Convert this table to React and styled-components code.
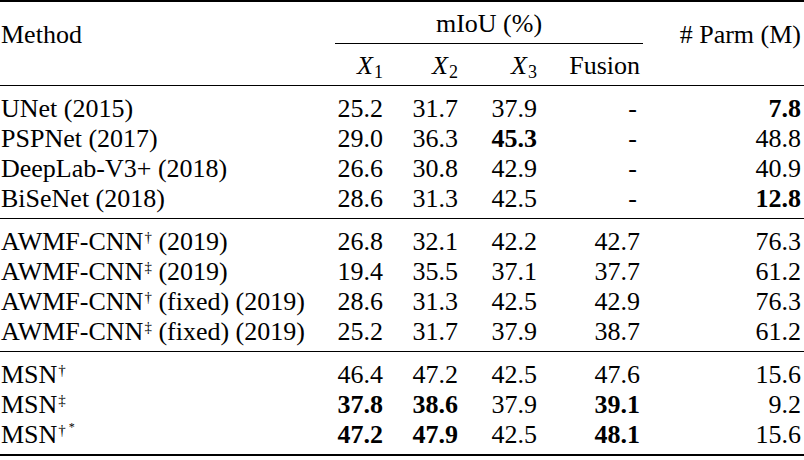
import React from "react";
import styled, { createGlobalStyle } from "styled-components";

const COLS = "335px 51px 75px 79px 103px 161px";

const GlobalStyle = createGlobalStyle`
  html, body { margin: 0; padding: 0; background: #fff; }
  body { width: 804px; height: 460px; overflow: hidden; }
`;

const Table = styled.div`
  width: 804px;
  font-family: "Liberation Serif", "Times New Roman", serif;
  font-size: 26px;
  color: #000;
`;

const Rule = styled.div`
  height: ${(p) => (p.$heavy ? "2px" : "1px")};
  background: #000;
`;

const Header = styled.div`
  display: grid;
  grid-template-columns: ${COLS};
  grid-template-rows: 30px 12px 30px;
  line-height: 30px;
  padding: 7px 0 4px;
`;

const SpanHead = styled.div`
  grid-row: 1 / 4;
  grid-column: ${(p) => p.$col};
  text-align: ${(p) => (p.$right ? "right" : "left")};
  padding: 11px ${(p) => (p.$right ? "3px" : "0")} 0 ${(p) => (p.$right ? "0" : "1px")};
  white-space: nowrap;
`;

const GroupHead = styled.div`
  grid-row: 1;
  grid-column: 2 / 6;
  text-align: center;
`;

const CmidRule = styled.div`
  grid-row: 2;
  grid-column: 2 / 6;
  align-self: start;
  margin-top: 4px;
  height: 1px;
  background: #000;
`;

const SubHead = styled.div`
  grid-row: 3;
  grid-column: ${(p) => p.$col};
  text-align: right;
  padding-right: 3px;
  white-space: nowrap;
`;

const Var = styled.span`
  font-style: italic;
`;

const Sub = styled.sub`
  font-style: normal;
  font-size: 18px;
  vertical-align: -4px;
  line-height: 0;
  margin-left: 1px;
`;

const Block = styled.div`
  padding: 8px 0 4px;
`;

const Row = styled.div`
  display: grid;
  grid-template-columns: ${COLS};
  height: 30px;
  line-height: 30px;
`;

const Cell = styled.div`
  text-align: ${(p) => (p.$left ? "left" : "right")};
  padding: 0 ${(p) => (p.$left ? "0" : p.$dash ? "6px" : "3px")} 0 ${(p) => (p.$left ? "1px" : "0")};
  font-weight: ${(p) => (p.$bold ? 700 : 400)};
  white-space: nowrap;
`;

const Sup = styled.sup`
  font-size: 15px;
  vertical-align: 8px;
  line-height: 0;
  margin-left: 1px;
`;

const Sup2 = styled.sup`
  font-size: 12px;
  vertical-align: 4px;
  line-height: 0;
  margin-left: 3px;
`;

const D = "\u2020";
const DD = "\u2021";

const blocks = [
  [
    [<>UNet (2015)</>, "25.2", "31.7", "37.9", "-", "**7.8"],
    [<>PSPNet (2017)</>, "29.0", "36.3", "**45.3", "-", "48.8"],
    [<>DeepLab-V3+ (2018)</>, "26.6", "30.8", "42.9", "-", "40.9"],
    [<>BiSeNet (2018)</>, "28.6", "31.3", "42.5", "-", "**12.8"],
  ],
  [
    [<>AWMF-CNN<Sup>{D}</Sup> (2019)</>, "26.8", "32.1", "42.2", "42.7", "76.3"],
    [<>AWMF-CNN<Sup>{DD}</Sup> (2019)</>, "19.4", "35.5", "37.1", "37.7", "61.2"],
    [<>AWMF-CNN<Sup>{D}</Sup> (fixed) (2019)</>, "28.6", "31.3", "42.5", "42.9", "76.3"],
    [<>AWMF-CNN<Sup>{DD}</Sup> (fixed) (2019)</>, "25.2", "31.7", "37.9", "38.7", "61.2"],
  ],
  [
    [<>MSN<Sup>{D}</Sup></>, "46.4", "47.2", "42.5", "47.6", "15.6"],
    [<>MSN<Sup>{DD}</Sup></>, "**37.8", "**38.6", "37.9", "**39.1", "9.2"],
    [<>MSN<Sup>{D}<Sup2>*</Sup2></Sup></>, "**47.2", "**47.9", "42.5", "**48.1", "15.6"],
  ],
];

function DataRow({ row }) {
  const [name, ...vals] = row;
  return (
    <Row>
      <Cell $left>{name}</Cell>
      {vals.map((v, i) => {
        const bold = v.startsWith("**");
        const text = bold ? v.slice(2) : v;
        return (
          <Cell key={i} $bold={bold} $dash={text === "-"}>
            {text}
          </Cell>
        );
      })}
    </Row>
  );
}

export default function App() {
  return (
    <>
      <GlobalStyle />
      <Table>
        <Rule $heavy />
        <Header>
          <SpanHead $col={1}>Method</SpanHead>
          <GroupHead>mIoU (%)</GroupHead>
          <CmidRule />
          <SubHead $col={2}>
            <Var>X</Var>
            <Sub>1</Sub>
          </SubHead>
          <SubHead $col={3}>
            <Var>X</Var>
            <Sub>2</Sub>
          </SubHead>
          <SubHead $col={4}>
            <Var>X</Var>
            <Sub>3</Sub>
          </SubHead>
          <SubHead $col={5}>Fusion</SubHead>
          <SpanHead $col={6} $right>
            # Parm (M)
          </SpanHead>
        </Header>
        {blocks.map((rows, bi) => (
          <React.Fragment key={bi}>
            <Rule />
            <Block>
              {rows.map((r, ri) => (
                <DataRow key={ri} row={r} />
              ))}
            </Block>
          </React.Fragment>
        ))}
        <Rule $heavy />
      </Table>
    </>
  );
}
